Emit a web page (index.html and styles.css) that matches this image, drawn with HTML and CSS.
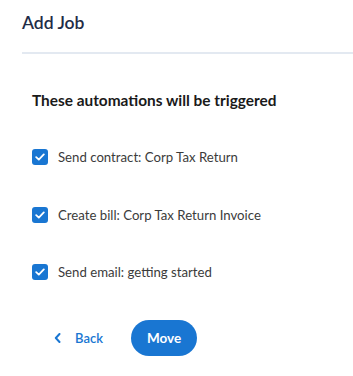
FILE: index.html
```
<!DOCTYPE html>
<html lang="en">
<head>
    <meta charset="UTF-8">
    <meta name="viewport" content="width=device-width, initial-scale=1.0">
    <title>Add Job</title>
    <link rel="stylesheet" href="styles.css">
</head>
<body>
    <div class="modal">
        <div class="modal-header">
            <h1>Add Job</h1>
        </div>

        <div class="modal-body">
            <h2 class="section-title">These automations will be triggered</h2>

            <ul class="automation-list">
                <li class="automation-item">
                    <span class="check">
                        <svg width="10" height="8" viewBox="0 0 10 8"><path d="M1.2 4.2 L3.8 6.6 L8.8 1.4" fill="none" stroke="#fff" stroke-width="1.8" stroke-linecap="round" stroke-linejoin="round"/></svg>
                    </span>
                    <span class="automation-label">Send contract: Corp Tax Return</span>
                </li>
                <li class="automation-item">
                    <span class="check">
                        <svg width="10" height="8" viewBox="0 0 10 8"><path d="M1.2 4.2 L3.8 6.6 L8.8 1.4" fill="none" stroke="#fff" stroke-width="1.8" stroke-linecap="round" stroke-linejoin="round"/></svg>
                    </span>
                    <span class="automation-label">Create bill: Corp Tax Return Invoice</span>
                </li>
                <li class="automation-item">
                    <span class="check">
                        <svg width="10" height="8" viewBox="0 0 10 8"><path d="M1.2 4.2 L3.8 6.6 L8.8 1.4" fill="none" stroke="#fff" stroke-width="1.8" stroke-linecap="round" stroke-linejoin="round"/></svg>
                    </span>
                    <span class="automation-label">Send email: getting started</span>
                </li>
            </ul>

            <div class="actions">
                <a href="#" class="btn-back">
                    <svg width="7" height="10" viewBox="0 0 7 10"><path d="M5.5 1 L1.8 5 L5.5 9" fill="none" stroke="#1976d2" stroke-width="2" stroke-linecap="round" stroke-linejoin="round"/></svg>
                    Back
                </a>
                <button class="btn-move">Move</button>
            </div>
        </div>
    </div>
</body>
</html>
```

FILE: styles.css
```
* {
    margin: 0;
    padding: 0;
    box-sizing: border-box;
}

body {
    font-family: Lato, 'Liberation Sans', sans-serif;
    color: #333;
    background-color: #fff;
}

.modal-header {
    margin-left: 22px;
    padding-top: 12px;
    height: 54px;
    border-bottom: 2px solid #e3e9f1;
}

.modal-header h1 {
    font-size: 17.5px;
    font-weight: 600;
    color: #1f2c47;
    line-height: 22px;
}

.modal-body {
    padding: 36px 32px 0;
}

.section-title {
    font-size: 15.4px;
    font-weight: bold;
    color: #1a1a1a;
    line-height: 20px;
}

.automation-list {
    list-style: none;
    margin-top: 37px;
}

.automation-item {
    display: flex;
    align-items: center;
    gap: 10px;
    height: 20px;
    margin-bottom: 37.5px;
}

.check {
    width: 16px;
    height: 16px;
    border-radius: 3px;
    background: #1976d2;
    display: flex;
    align-items: center;
    justify-content: center;
}

.automation-label {
    font-size: 13.2px;
    color: #3b3b3b;
}

.actions {
    display: flex;
    align-items: center;
    margin-top: 8px;
    padding-left: 22px;
}

.btn-back {
    display: flex;
    align-items: center;
    gap: 14px;
    color: #1976d2;
    font-size: 13px;
    font-weight: 600;
    text-decoration: none;
    width: 77px;
}

.btn-move {
    width: 66px;
    height: 36px;
    border: none;
    border-radius: 18px;
    background: #1976d2;
    color: #fff;
    font-family: inherit;
    font-size: 13.5px;
    font-weight: bold;
    cursor: pointer;
}
```
